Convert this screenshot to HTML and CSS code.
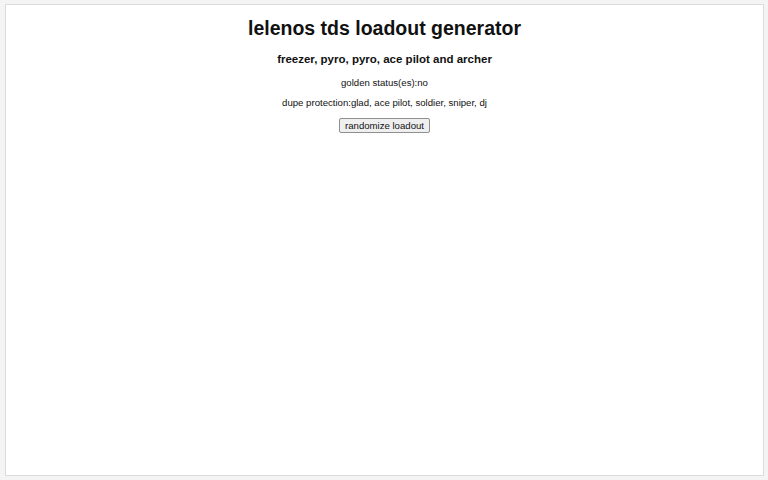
FILE: index.html
```html
<!DOCTYPE html>
<html lang="en">
<head>
    <meta charset="UTF-8">
    <title>lelenos tds loadout generator</title>
    <link rel="stylesheet" href="styles.css">
</head>
<body>
    <div class="container">
        <h1>lelenos tds loadout generator</h1>
        <h2 class="loadout">freezer, pyro, pyro, ace pilot and archer</h2>
        <p class="info">golden status(es):no</p>
        <p class="info">dupe protection:glad, ace pilot, soldier, sniper, dj</p>
        <button class="randomize-btn">randomize loadout</button>
    </div>
</body>
</html>
```

FILE: styles.css
```css
* {
    box-sizing: border-box;
}

html, body {
    height: 100%;
}

body {
    margin: 0;
    padding: 4px 4px 4px 5px;
    background: #f4f4f4;
    font-family: "Liberation Sans", Arial, sans-serif;
    color: #111;
}

.container {
    height: 100%;
    background: white;
    border: 1px solid #dcdcdc;
    text-align: center;
    padding-top: 12px;
}

h1 {
    font-size: 19.5px;
    line-height: 22px;
    margin: 0 0 14px;
}

.loadout {
    font-size: 11.5px;
    line-height: 13px;
    margin: 0 0 11px;
}

.info {
    font-size: 9.6px;
    line-height: 11px;
    margin: 0 0 9px;
}

.randomize-btn {
    vertical-align: top;
    margin-top: 1px;
    font-family: "Liberation Sans", Arial, sans-serif;
    font-size: 9.6px;
    line-height: 11px;
    height: 15px;
    padding: 0 5px;
    background: #efefef;
    color: #111;
    border: 1px solid #8f8f8f;
    border-radius: 2px;
}
```
